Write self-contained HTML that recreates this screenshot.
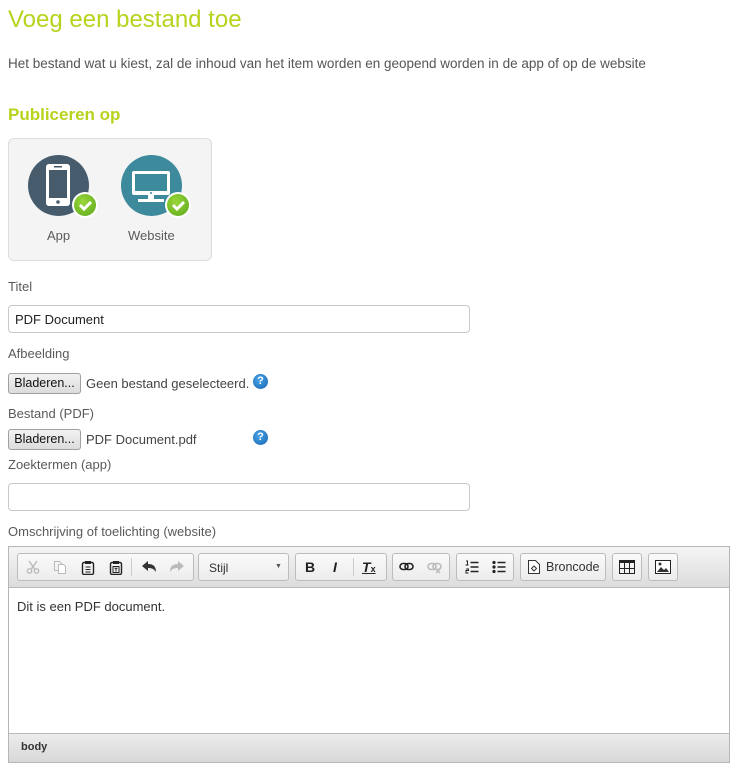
<!DOCTYPE html>
<html><head><meta charset="utf-8"><style>
*{box-sizing:border-box;margin:0;padding:0}
body{width:737px;height:771px;background:#fff;font-family:"Liberation Sans",sans-serif;color:#555;position:relative;overflow:hidden}
.a{position:absolute;white-space:nowrap}
.lbl{font-size:13px;color:#5a5a5a}
.inp{position:absolute;left:8px;width:462px;height:28px;border:1px solid #c8c8c8;border-radius:4px;background:#fff;font-size:13px;color:#222;padding:6px 6px}
.btn{position:absolute;left:8px;width:73px;height:21px;border:1px solid #a0a0a0;border-radius:3px;background:linear-gradient(#f2f2f2,#dcdcdc);font-size:12.5px;color:#111;text-align:center;line-height:19px}
.q{position:absolute;width:15px;height:15px;border-radius:50%;background:radial-gradient(circle at 40% 35%,#4aa3e8,#1565b0);color:#fff;font-size:11px;font-weight:bold;text-align:center;line-height:15px}
.grp{position:absolute;top:553px;height:28px;border:1px solid #bcbcbc;border-radius:3px;background:linear-gradient(#fafafa,#ececec)}
svg.t{position:absolute;top:560px}
</style></head><body>
<div class="a" style="left:8px;top:6px;font-size:24px;color:#b9d21c">Voeg een bestand toe</div>
<div class="a" style="left:8px;top:56px;font-size:13.5px;color:#555">Het bestand wat u kiest, zal de inhoud van het item worden en geopend worden in de app of op de website</div>
<div class="a" style="left:8px;top:105px;font-size:17px;font-weight:bold;color:#b9d21c">Publiceren op</div>

<div class="a" style="left:8px;top:138px;width:204px;height:123px;background:#f4f4f4;border:1px solid #ddd;border-radius:6px"></div>
<div class="a" style="left:28px;top:155px;width:61px;height:61px;border-radius:50%;background:#465c6d"></div>
<svg class="a" style="left:45px;top:163px" width="26" height="44" viewBox="0 0 26 44"><rect x="1" y="1" width="24" height="42" rx="3" fill="#fff"/><rect x="4" y="7" width="18" height="28" fill="#465c6d"/><rect x="9" y="3" width="8" height="1.5" fill="#465c6d"/><circle cx="13" cy="39" r="1.8" fill="#465c6d"/></svg>
<div class="a" style="left:72px;top:192px;width:26px;height:26px;border-radius:50%;background:#fff"></div>
<div class="a" style="left:74px;top:194px;width:22px;height:22px;border-radius:50%;background:radial-gradient(circle at 40% 35%,#9ad63a,#5aa81a)"></div>
<svg class="a" style="left:74px;top:194px" width="22" height="22"><path d="M6 11l4 4 7-7" stroke="#fff" stroke-width="3" fill="none"/></svg>
<div class="a lbl" style="left:47px;top:228px">App</div>

<div class="a" style="left:121px;top:155px;width:61px;height:61px;border-radius:50%;background:#3d8a9d"></div>
<svg class="a" style="left:131px;top:170px" width="40" height="34" viewBox="0 0 40 34"><rect x="1" y="1" width="38" height="24" rx="2" fill="#fff"/><rect x="4" y="4" width="32" height="17" fill="#3d8a9d"/><circle cx="20" cy="23" r="1" fill="#3d8a9d"/><rect x="17" y="25" width="6" height="4" fill="#fff"/><rect x="7" y="29" width="26" height="3" fill="#fff"/></svg>
<div class="a" style="left:165px;top:192px;width:26px;height:26px;border-radius:50%;background:#fff"></div>
<div class="a" style="left:167px;top:194px;width:22px;height:22px;border-radius:50%;background:radial-gradient(circle at 40% 35%,#9ad63a,#5aa81a)"></div>
<svg class="a" style="left:167px;top:194px" width="22" height="22"><path d="M6 11l4 4 7-7" stroke="#fff" stroke-width="3" fill="none"/></svg>
<div class="a lbl" style="left:128px;top:228px">Website</div>

<div class="a lbl" style="left:8px;top:279px">Titel</div>
<div class="inp" style="top:305px">PDF Document</div>
<div class="a lbl" style="left:8px;top:346px">Afbeelding</div>
<div class="btn" style="top:373px">Bladeren...</div>
<div class="a lbl" style="left:86px;top:376px;color:#444">Geen bestand geselecteerd.</div>
<div class="q" style="left:253px;top:374px">?</div>
<div class="a lbl" style="left:8px;top:406px">Bestand (PDF)</div>
<div class="btn" style="top:429px">Bladeren...</div>
<div class="a lbl" style="left:86px;top:432px;color:#444">PDF Document.pdf</div>
<div class="q" style="left:253px;top:430px">?</div>
<div class="a lbl" style="left:8px;top:457px">Zoektermen (app)</div>
<div class="inp" style="top:483px"></div>
<div class="a lbl" style="left:8px;top:524px">Omschrijving of toelichting (website)</div>

<div class="a" style="left:8px;top:546px;width:722px;height:217px;border:1px solid #b6b6b6;background:#fff"></div>
<div class="a" style="left:9px;top:547px;width:720px;height:41px;background:linear-gradient(#f5f5f5,#dcdcdc);border-bottom:1px solid #bbb"></div>
<div class="grp" style="left:17px;width:177px"></div>
<svg class="t" style="left:26px" width="14" height="14"><circle cx="3.5" cy="11" r="2.2" fill="none" stroke="#bbb" stroke-width="1.4"/><circle cx="10.5" cy="11" r="2.2" fill="none" stroke="#bbb" stroke-width="1.4"/><path d="M5 9.5L11 1M9 9.5L3 1" stroke="#bbb" stroke-width="1.5"/></svg>
<svg class="t" style="left:53px" width="14" height="14"><path d="M1.5 1.5h5l2 2v7h-7z" fill="none" stroke="#bbb"/><path d="M5.5 4.5h5l2 2v7h-7z" fill="#fff" stroke="#bbb"/></svg>
<svg class="t" style="left:81px" width="14" height="15"><rect x="1.5" y="2.5" width="11" height="12" rx="1.5" fill="none" stroke="#222" stroke-width="1.4"/><rect x="4" y="1" width="6" height="3" fill="#222"/><path d="M4.5 7h5M4.5 9.5h5M4.5 12h5" stroke="#222"/></svg>
<svg class="t" style="left:109px" width="14" height="15"><rect x="1.5" y="2.5" width="11" height="12" rx="1.5" fill="none" stroke="#222" stroke-width="1.4"/><rect x="4" y="1" width="6" height="3" fill="#222"/><rect x="4" y="6.5" width="6" height="6" fill="none" stroke="#222"/><path d="M5.5 8.2h3M7 8.2v3.3" stroke="#222"/></svg>
<div class="a" style="left:131px;top:558px;width:1px;height:18px;background:#ccc"></div>
<svg class="t" style="left:141px;top:561px" width="16" height="12"><path d="M1 5l6-5v3c5 0 8 2 8 8-2-3-4-4-8-4v3z" fill="#333"/></svg>
<svg class="t" style="left:169px;top:561px" width="16" height="12"><path d="M15 5l-6-5v3c-5 0-8 2-8 8 2-3 4-4 8-4v3z" fill="#bbb"/></svg>
<div class="grp" style="left:198px;width:91px"></div>
<div class="a" style="left:209px;top:561px;font-size:12px;color:#333">Stijl</div>
<div class="a" style="left:275px;top:563px;font-size:7px;color:#555">▼</div>
<div class="grp" style="left:295px;width:92px"></div>
<div class="a" style="left:305px;top:559px;font-size:14px;font-weight:bold;color:#222">B</div>
<div class="a" style="left:333px;top:559px;font-size:14px;font-weight:bold;font-style:italic;color:#222">I</div>
<div class="a" style="left:353px;top:558px;width:1px;height:18px;background:#ccc"></div>
<div class="a" style="left:362px;top:559px;font-size:14px;font-weight:bold;font-style:italic;color:#222;text-decoration:underline">T<span style="font-size:9px;font-style:normal;text-decoration:none">x</span></div>
<div class="grp" style="left:392px;width:58px"></div>
<svg class="t" style="left:399px;top:562px" width="15" height="10"><rect x="1" y="1.5" width="8" height="6" rx="3" fill="none" stroke="#222" stroke-width="1.6"/><rect x="6" y="1.5" width="8" height="6" rx="3" fill="none" stroke="#222" stroke-width="1.6"/></svg>
<svg class="t" style="left:427px;top:562px" width="15" height="12"><rect x="1" y="1.5" width="8" height="6" rx="3" fill="none" stroke="#bbb" stroke-width="1.6"/><rect x="6" y="1.5" width="8" height="6" rx="3" fill="none" stroke="#bbb" stroke-width="1.6"/><path d="M9 7l4 4M13 7l-4 4" stroke="#bbb" stroke-width="1.4"/></svg>
<div class="grp" style="left:456px;width:58px"></div>
<svg class="t" style="left:465px" width="14" height="14"><path d="M1 1h1.5v4M0.5 5h3M1 9h2.5v1.5H1V13h2.5" stroke="#222" fill="none"/><path d="M5.5 2.5h8M5.5 7h8M5.5 11.5h8" stroke="#222" stroke-width="1.4"/></svg>
<svg class="t" style="left:492px" width="14" height="14"><circle cx="2" cy="2.5" r="1.6" fill="#222"/><circle cx="2" cy="7" r="1.6" fill="#222"/><circle cx="2" cy="11.5" r="1.6" fill="#222"/><path d="M5.5 2.5h8M5.5 7h8M5.5 11.5h8" stroke="#222" stroke-width="1.4"/></svg>
<div class="grp" style="left:520px;width:86px"></div>
<svg class="t" style="left:528px;top:560px" width="12" height="14"><path d="M.5.5h7l4 4v9H.5z" fill="#fff" stroke="#333"/><path d="M6 6l2.5 2.5L6 11 3.5 8.5z" fill="none" stroke="#333"/></svg>
<div class="a" style="left:546px;top:560px;font-size:12.5px;color:#333">Broncode</div>
<div class="grp" style="left:612px;width:30px"></div>
<svg class="a" style="left:619px;top:560px" width="16" height="14"><rect x=".5" y=".5" width="15" height="13" fill="none" stroke="#222"/><rect x="0" y="0" width="16" height="3" fill="#222"/><path d="M5.5 3v11M10.5 3v11M0 8.5h16" stroke="#222"/></svg>
<div class="grp" style="left:648px;width:30px"></div>
<svg class="a" style="left:655px;top:560px" width="16" height="14"><rect x=".5" y=".5" width="15" height="13" fill="#fff" stroke="#222"/><path d="M2 12l4-5 3 3 2-2 3 4z" fill="#333"/><circle cx="5" cy="4" r="1.5" fill="#333"/></svg>

<div class="a" style="left:17px;top:599px;font-size:13px;color:#333">Dit is een PDF document.</div>
<div class="a" style="left:9px;top:733px;width:720px;height:29px;background:linear-gradient(#ececec,#d8d8d8);border-top:1px solid #bbb"></div>
<div class="a" style="left:21px;top:741px;font-size:11px;font-weight:bold;color:#333">body</div>
</body></html>
